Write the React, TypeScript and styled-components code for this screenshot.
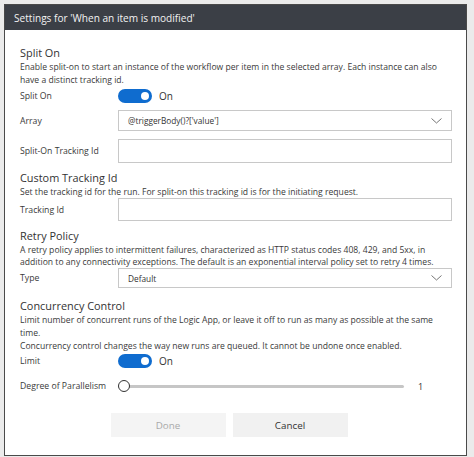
import React from "react";
import styled, { createGlobalStyle } from "styled-components";

const Global = createGlobalStyle`
  html, body {
    margin: 0;
    padding: 0;
    background: #ebebeb;
  }
  body {
    font-family: "Open Sans", "Noto Sans", sans-serif;
    color: #333;
  }
`;

const Page = styled.div`
  padding: 4px 0 0 4px;
`;

const Dialog = styled.div`
  width: 463px;
  height: 452px;
  box-sizing: border-box;
  background: #fff;
  border: 1px solid #4a4a4a;
  display: flex;
  flex-direction: column;
`;

const Header = styled.div`
  height: 25px;
  background: #3b3f46;
  color: #f2f2f2;
  font-size: 10.1px;
  display: flex;
  align-items: center;
  padding-left: 9px;
`;

const Body = styled.div`
  padding: 0 14px 0 15px;
  display: flex;
  flex-direction: column;
`;

const Heading = styled.div<{ $top: number }>`
  margin-top: ${(p) => p.$top}px;
  font-size: 10.9px;
  line-height: 17px;
  color: #333;
`;

const Description = styled.div<{ $lh?: number }>`
  font-size: 8.6px;
  line-height: ${(p) => p.$lh ?? 13}px;
  color: #3a3a3a;
`;

const Row = styled.div<{ $h: number; $top?: number }>`
  display: grid;
  grid-template-columns: 98px 1fr;
  align-items: center;
  height: ${(p) => p.$h}px;
  margin-top: ${(p) => p.$top ?? 0}px;
`;

const Label = styled.div`
  font-size: 8.7px;
  color: #3a3a3a;
`;

const Field = styled.div<{ $h: number }>`
  box-sizing: border-box;
  height: ${(p) => p.$h}px;
  border: 1px solid #c8c8c8;
  background: #fff;
  display: flex;
  align-items: center;
  padding: 0 9px 0 9px;
  font-size: 8.3px;
  color: #333;
`;

const FieldText = styled.span`
  flex: 1;
`;

const Chevron = () => (
  <svg width="11" height="6" viewBox="0 0 11 6" fill="none">
    <path d="M0.5 0.5 L5.5 5 L10.5 0.5" stroke="#666" strokeWidth="0.9" />
  </svg>
);

const ToggleWrap = styled.div`
  display: flex;
  align-items: center;
  gap: 7px;
`;

const Track = styled.div`
  width: 34px;
  height: 14px;
  border-radius: 7px;
  background: #0f6ccf;
  position: relative;
`;

const Knob = styled.div`
  position: absolute;
  right: 3px;
  top: 3px;
  width: 8px;
  height: 8px;
  border-radius: 50%;
  background: #fff;
`;

const ToggleText = styled.span`
  font-size: 10px;
  color: #333;
`;

const Toggle = () => (
  <ToggleWrap>
    <Track>
      <Knob />
    </Track>
    <ToggleText>On</ToggleText>
  </ToggleWrap>
);

const SliderWrap = styled.div`
  display: flex;
  align-items: center;
`;

const SliderRail = styled.div`
  position: relative;
  flex: 1;
  height: 12px;
  display: flex;
  align-items: center;
  margin-right: 14px;
`;

const SliderLine = styled.div`
  width: 100%;
  height: 3px;
  background: #c6c6c6;
  border-radius: 2px;
`;

const Thumb = styled.div`
  position: absolute;
  left: 0;
  top: 0;
  width: 12px;
  height: 12px;
  box-sizing: border-box;
  border: 1.5px solid #333;
  border-radius: 50%;
  background: #fff;
`;

const SliderValue = styled.span`
  width: 34px;
  font-size: 9px;
  color: #333;
`;

const Buttons = styled.div`
  display: flex;
  justify-content: center;
  gap: 7px;
  margin-top: 18px;
  padding-right: 14px;
`;

const Button = styled.button<{ $disabled?: boolean }>`
  width: 115px;
  height: 24px;
  border: none;
  background: ${(p) => (p.$disabled ? "#f4f4f4" : "#f1f1f1")};
  color: ${(p) => (p.$disabled ? "#a9a9a9" : "#333")};
  font-family: "Open Sans", "Noto Sans", sans-serif;
  font-size: 9.8px;
  padding: 0;
`;

export default function App() {
  return (
    <>
      <Global />
      <Page>
        <Dialog>
          <Header>Settings for 'When an item is modified'</Header>
          <Body>
            <Heading $top={14}>Split On</Heading>
            <Description>
              Enable split-on to start an instance of the workflow per item in the selected array. Each instance can also
              have a distinct tracking id.
            </Description>
            <Row $h={18}>
              <Label>Split On</Label>
              <Toggle />
            </Row>
            <Row $h={21} $top={5}>
              <Label>Array</Label>
              <Field $h={21}>
                <FieldText>@triggerBody()?['value']</FieldText>
                <Chevron />
              </Field>
            </Row>
            <Row $h={24} $top={8}>
              <Label>Split-On Tracking Id</Label>
              <Field $h={24} />
            </Row>

            <Heading $top={6}>Custom Tracking Id</Heading>
            <Description $lh={12}>
              Set the tracking id for the run. For split-on this tracking id is for the initiating request.
            </Description>
            <Row $h={23}>
              <Label>Tracking Id</Label>
              <Field $h={23} />
            </Row>

            <Heading $top={6}>Retry Policy</Heading>
            <Description $lh={12}>
              A retry policy applies to intermittent failures, characterized as HTTP status codes 408, 429, and 5xx, in
              addition to any connectivity exceptions. The default is an exponential interval policy set to retry 4 times.
            </Description>
            <Row $h={20}>
              <Label>Type</Label>
              <Field $h={20}>
                <FieldText>Default</FieldText>
                <Chevron />
              </Field>
            </Row>

            <Heading $top={9}>Concurrency Control</Heading>
            <Description>
              Limit number of concurrent runs of the Logic App, or leave it off to run as many as possible at the same
              time.
              <br />
              Concurrency control changes the way new runs are queued. It cannot be undone once enabled.
            </Description>
            <Row $h={16}>
              <Label>Limit</Label>
              <Toggle />
            </Row>
            <Row $h={18} $top={8}>
              <Label>Degree of Parallelism</Label>
              <SliderWrap>
                <SliderRail>
                  <SliderLine />
                  <Thumb />
                </SliderRail>
                <SliderValue>1</SliderValue>
              </SliderWrap>
            </Row>
            <Buttons>
              <Button $disabled>Done</Button>
              <Button>Cancel</Button>
            </Buttons>
          </Body>
        </Dialog>
      </Page>
    </>
  );
}
